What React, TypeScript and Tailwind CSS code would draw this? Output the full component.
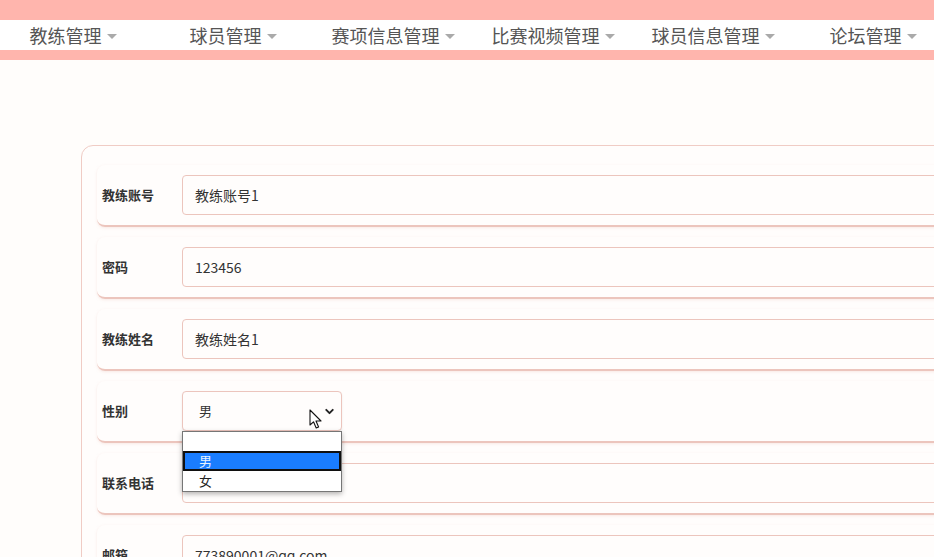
import { ChevronDown } from 'lucide-react'

const navItems = ['教练管理', '球员管理', '赛项信息管理', '比赛视频管理', '球员信息管理', '论坛管理']

const fields = [
  { label: '教练账号', value: '教练账号1' },
  { label: '密码', value: '123456' },
  { label: '教练姓名', value: '教练姓名1' },
  { label: '性别', value: '男', select: true },
  { label: '联系电话', value: '' },
  { label: '邮箱', value: '773890001@qq.com' },
]

function Cursor() {
  return (
    <svg width="14" height="21" viewBox="0 0 14 21" className="absolute left-[309px] top-[409px]">
      <path d="M1 1 L1 16 L4.5 12.8 L7.2 19 L9.6 18 L7 12 L12 12 Z" fill="#fff" stroke="#111" strokeWidth="1.1" strokeLinejoin="round" />
    </svg>
  )
}

export default function App() {
  return (
    <div
      className="relative h-[557px] w-full overflow-hidden bg-[#fffdfb]"
      style={{ fontFamily: '"Microsoft YaHei", "Noto Sans CJK SC", "Noto Sans", sans-serif' }}
    >
      {/* Header */}
      <div className="h-[20px] bg-[#ffb5ad]" />
      <nav className="flex h-[30px] items-center bg-white -ml-[7px]">
        {navItems.map((item) => (
          <div key={item} className="flex w-[160px] shrink-0 items-center justify-center gap-[5px] text-[18px] text-[#555]">
            <span>{item}</span>
            <span className="mt-[2px] h-0 w-0 border-x-[5px] border-t-[5px] border-x-transparent border-t-[#aaa]" />
          </div>
        ))}
      </nav>
      <div className="h-[10px] bg-[#ffb5ad]" />

      {/* Form */}
      <div className="ml-[81px] mt-[85px] w-[1000px] rounded-[12px] border border-[#f0ccc5] bg-[#fffdfc] px-[15px] pt-[19px]">
        {fields.map((f) => (
          <div
            key={f.label}
            className="mb-[10px] flex items-center rounded-[8px] border-b-[2px] border-[#ecc5bd] pb-[10px] pl-[5px] pt-[10px] shadow-[0_1px_3px_rgba(236,197,189,0.35)]"
          >
            <label className="w-[80px] shrink-0 text-[13px] font-bold text-[#333]">{f.label}</label>
            {f.select ? (
              <div className="flex h-[40px] w-[160px] items-center justify-between rounded-[4px] border border-[#ecc5bd] bg-[#fffdfc] pl-[16px] pr-[5px] text-[13px] text-[#333] shadow-[0_1px_2px_rgba(0,0,0,0.08)]">
                <span>{f.value}</span>
                <ChevronDown className="h-[13px] w-[13px] text-[#222]" strokeWidth={3.5} />
              </div>
            ) : (
              <div className="flex h-[40px] flex-1 items-center rounded-[4px] border border-[#ecc5bd] bg-[#fffdfc] pl-[12px] text-[14px] text-[#333]">
                {f.value}
              </div>
            )}
          </div>
        ))}
      </div>

      {/* Open select list */}
      <div className="absolute left-[182px] top-[431px] w-[160px] border border-[#767676] bg-white text-[13px] text-[#222] shadow-[0_2px_5px_rgba(0,0,0,0.3)]">
        <div className="h-[19px]" />
        <div className="flex h-[20px] items-center border-2 border-[#101010] bg-[#1a7dff] pl-[14px] text-[#e6f2ff]">男</div>
        <div className="flex h-[20px] items-center pl-[16px]">女</div>
      </div>
      <Cursor />
    </div>
  )
}
